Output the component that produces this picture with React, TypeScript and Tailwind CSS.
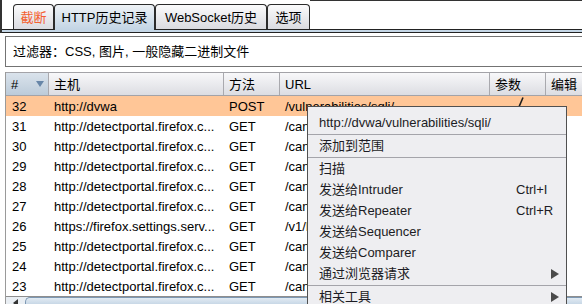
import React from "react";

const rows = [
  { id: "32", host: "http://dvwa", method: "POST", url: "/vulnerabilities/sqli/", params: true, sel: true },
  { id: "31", host: "http://detectportal.firefox.c...", method: "GET", url: "/canonical.html" },
  { id: "30", host: "http://detectportal.firefox.c...", method: "GET", url: "/canonical.html" },
  { id: "29", host: "http://detectportal.firefox.c...", method: "GET", url: "/canonical.html" },
  { id: "28", host: "http://detectportal.firefox.c...", method: "GET", url: "/canonical.html" },
  { id: "27", host: "http://detectportal.firefox.c...", method: "GET", url: "/canonical.html" },
  { id: "26", host: "https://firefox.settings.serv...", method: "GET", url: "/v1/buckets/monitor/collections" },
  { id: "25", host: "http://detectportal.firefox.c...", method: "GET", url: "/canonical.html" },
  { id: "24", host: "http://detectportal.firefox.c...", method: "GET", url: "/canonical.html" },
  { id: "23", host: "http://detectportal.firefox.c...", method: "GET", url: "/canonical.html" },
];

const menu: any[] = [
  { label: "http://dvwa/vulnerabilities/sqli/" },
  { sep: true },
  { label: "添加到范围" },
  { sep: true },
  { label: "扫描" },
  { label: "发送给Intruder", key: "Ctrl+I" },
  { label: "发送给Repeater", key: "Ctrl+R" },
  { label: "发送给Sequencer" },
  { label: "发送给Comparer" },
  { label: "通过浏览器请求", sub: true },
  { sep: true },
  { label: "相关工具", sub: true },
];

function Arrow() {
  return (
    <svg width="8" height="10" viewBox="0 0 8 10">
      <polygon points="0,0 8,5 0,10" fill="#4a4a4a" />
    </svg>
  );
}

export default function App() {
  return (
    <div className="relative w-[582px] h-[304px] overflow-hidden bg-white text-[13px] leading-[15px] text-black font-['Liberation_Sans','Noto_Sans_CJK_SC',sans-serif]">
      {/* tabs */}
      <div className="flex border-l-2 border-[#333]">
        <div className="flex-1">
          <div className="h-[29px] flex items-end pl-[11px]">
            <div className="w-[41px] h-[25px] rounded-t-[4px] border border-b-0 border-[#2b2b2b] bg-gradient-to-b from-[#fbfbfc] to-[#dadbe0] flex items-center justify-center text-[#f4602f]">
              截断
            </div>
            <div className="relative z-10 -mb-px w-[101px] h-[26px] rounded-t-[4px] border border-b-0 border-[#2b2b2b] bg-gradient-to-b from-[#eef2f6] to-[#c2d4e4] flex items-center justify-center pb-px">
              HTTP历史记录
            </div>
            <div className="w-[112px] h-[25px] rounded-t-[4px] border border-b-0 border-[#2b2b2b] bg-gradient-to-b from-[#fbfbfc] to-[#dadbe0] flex items-center justify-center">
              WebSocket历史
            </div>
            <div className="w-[43px] h-[25px] rounded-t-[4px] border border-b-0 border-[#2b2b2b] bg-gradient-to-b from-[#fbfbfc] to-[#dadbe0] flex items-center justify-center">
              选项
            </div>
            <div className="flex-1 self-start h-px bg-[#333]" />
          </div>
          <div className="h-[4px] border-t border-b border-[#222] bg-[#c4d6e6]" />
        </div>
      </div>

      {/* filter */}
      <div className="ml-[5px] mt-[3px] w-[600px] h-[31px] border border-[#737373] flex items-center pl-[7px]">
        过滤器：CSS, 图片, 一般隐藏二进制文件
      </div>

      {/* table */}
      <div className="ml-[5px] mt-[5px] border-l border-[#9a9a9a]">
        <div className="h-[24px] flex border-t border-b border-[#a3a3a8]">
          <div className="w-[43px] flex items-center justify-between pl-[5px] pr-[4px] border-r border-[#a9a9ae] bg-gradient-to-b from-[#dae3ec] to-[#bccbd9]">
            <span>#</span>
            <svg width="8" height="6" viewBox="0 0 8 6">
              <polygon points="0,0 8,0 4,6" fill="#6786a8" />
            </svg>
          </div>
          <div className="w-[175px] flex items-center pl-[5px] border-r border-[#a9a9ae] bg-gradient-to-b from-[#f8f8fa] to-[#dcdde2]">主机</div>
          <div className="w-[56px] flex items-center pl-[5px] border-r border-[#a9a9ae] bg-gradient-to-b from-[#f8f8fa] to-[#dcdde2]">方法</div>
          <div className="w-[210px] flex items-center pl-[5px] border-r border-[#a9a9ae] bg-gradient-to-b from-[#f8f8fa] to-[#dcdde2]">URL</div>
          <div className="w-[56px] flex items-center pl-[5px] border-r border-[#a9a9ae] bg-gradient-to-b from-[#f8f8fa] to-[#dcdde2]">参数</div>
          <div className="flex-1 flex items-center pl-[5px] bg-gradient-to-b from-[#f8f8fa] to-[#dcdde2]">编辑</div>
        </div>
        {rows.map((r) => (
          <div key={r.id} className={`h-[20px] flex items-center whitespace-nowrap ${r.sel ? "bg-[#ffc697]" : "bg-white"}`}>
            <div className="w-[43px] pl-[6px]">{r.id}</div>
            <div className="w-[175px] pl-[5px] overflow-hidden">{r.host}</div>
            <div className="w-[56px] pl-[5px]">{r.method}</div>
            <div className="w-[210px] pl-[5px] overflow-hidden">{r.url}</div>
            <div className="w-[56px] h-full flex justify-center pt-[1px]">
              {r.params && (
                <svg width="12" height="16" viewBox="0 0 12 16">
                  <path d="M1.5 10 L5 14.5 L11 0.5" fill="none" stroke="#1e1e1e" strokeWidth="1.6" />
                </svg>
              )}
            </div>
          </div>
        ))}
        {/* horizontal scrollbar */}
        <div className="h-[10px] flex border-t border-[#8e8e8e] bg-[#e9eef3]">
          <div className="w-[19px] flex items-start justify-center pt-[2px]">
            <svg width="5" height="8" viewBox="0 0 5 8">
              <polygon points="5,0 0,4 5,8" fill="#333" />
            </svg>
          </div>
          <div className="flex-1 rounded-tl-[5px] border-l border-t border-[#7d98b3] bg-gradient-to-b from-[#e2ebf3] to-[#bfd1e2]" />
        </div>
      </div>

      {/* context menu */}
      <div className="absolute left-[307px] top-[106px] w-[260px] h-[220px] border border-[#505050] bg-[#eeeef1] pt-[5px] text-[#1c1c24]">
        {menu.map((m, i) =>
          m.sep ? (
            <div key={i} className="h-[2px] border-b border-[#a4a4aa]" />
          ) : (
            <div key={i} className="h-[21px] flex items-center pl-[11px] pr-[7px] whitespace-nowrap">
              <span className="w-[197px]">{m.label}</span>
              {m.key && <span>{m.key}</span>}
              {m.sub && (
                <span className="ml-auto flex">
                  <Arrow />
                </span>
              )}
            </div>
          )
        )}
      </div>
    </div>
  );
}
